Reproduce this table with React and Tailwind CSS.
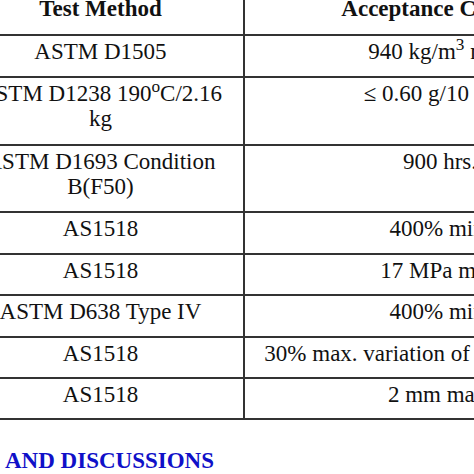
import React from "react"

const rows = [
    { method: ["ASTM D1505"], value: <>940 kg/m<sup>3</sup> min.</>, h: "h-[42px]" },
    { method: ["ASTM D1238 190", "kg"], deg: true, value: <>≤ 0.60 g/10 min.</>, h: "h-[68px]" },
    { method: ["ASTM D1693 Condition", "B(F50)"], value: <>900 hrs.</>, h: "h-[67px]" },
    { method: ["AS1518"], value: <>400% min.</>, h: "h-[42px]" },
    { method: ["AS1518"], value: <>17 MPa min.</>, h: "h-[41px]" },
    { method: ["ASTM D638 Type IV"], value: <>400% min.</>, h: "h-[42px]" },
    { method: ["AS1518"], value: <>30% max. variation of tensile strength</>, h: "h-[41px]" },
    { method: ["AS1518"], value: <>2 mm max.</>, h: "h-[41px]" },
]

function MethodText({ row }) {
    if (row.deg) {
        return (
            <>
                ASTM D1238 190<sup>o</sup>C/2.16
                <br />
                kg
            </>
        )
    }
    return row.method.map((line, i) => (
        <React.Fragment key={i}>
            {i > 0 && <br />}
            {line}
        </React.Fragment>
    ))
}

export default function App() {
    return (
        <div
            className="w-[474px] h-[474px] overflow-hidden bg-white text-[#111] text-[23px] leading-[25px]"
            style={{ fontFamily: '"Liberation Serif", "Times New Roman", serif' }}
        >
            <div className="ml-[-42px] mt-[-6px] w-[677px]">
                {/* header */}
                <div className="grid grid-cols-[285px_392px] h-[42px] border-b-2 border-[#333] font-bold">
                    <div className="pt-[2px] text-center">Test Method</div>
                    <div className="pt-[2px] text-center border-l-2 border-[#333]">Acceptance Criteria</div>
                </div>
                {rows.map((row, i) => (
                    <div key={i} className={`grid grid-cols-[285px_392px] border-b-2 border-[#333] ${row.h}`}>
                        <div className="pt-[3px] text-center whitespace-nowrap">
                            <MethodText row={row} />
                        </div>
                        <div className="pt-[3px] text-center whitespace-nowrap border-l-2 border-[#333]">
                            {row.value}
                        </div>
                    </div>
                ))}
            </div>
            <div className="mt-[28px] pl-[5px] font-bold text-[#1010c8] whitespace-nowrap">AND DISCUSSIONS</div>
        </div>
    )
}
